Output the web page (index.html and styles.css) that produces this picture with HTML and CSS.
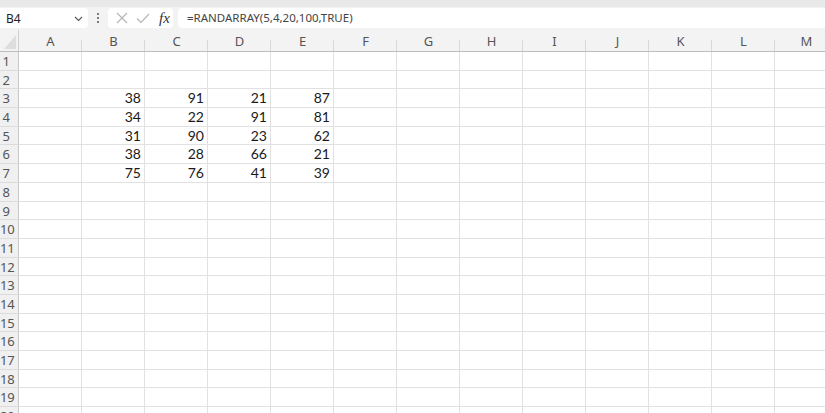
FILE: index.html
```html
<!DOCTYPE html>
<html lang="en">
<head>
  <meta charset="UTF-8">
  <title>Book1 - Excel</title>
  <link rel="stylesheet" href="styles.css">
</head>
<body>
  <div class="top-strip"></div>

  <!-- Name box + formula bar -->
  <div class="formula-bar">
    <div class="name-box">
      <span>B4</span>
      <svg class="chevron" width="9" height="6" viewBox="0 0 9 6"><path d="M1 1 L4.5 4.5 L8 1" fill="none" stroke="#555" stroke-width="1.1"/></svg>
    </div>
    <div class="dots"><i></i><i></i><i></i></div>
    <div class="fx-box">
      <svg width="12" height="12" viewBox="0 0 12 12"><path d="M1 1 L11 11 M11 1 L1 11" stroke="#b4b4b4" stroke-width="1.1" fill="none"/></svg>
      <svg width="14" height="11" viewBox="0 0 14 11"><path d="M1 5.5 L5 9.5 L13 1" stroke="#b4b4b4" stroke-width="1.1" fill="none"/></svg>
      <span class="fx">fx</span>
    </div>
    <div class="formula">=RANDARRAY(5,4,20,100,TRUE)</div>
  </div>

  <!-- Worksheet grid -->
  <div class="sheet" id="sheet"></div>

  <script>
    const cols = ['A','B','C','D','E','F','G','H','I','J','K','L','M'];
    const data = {
      3: [38, 91, 21, 87],
      4: [34, 22, 91, 81],
      5: [31, 90, 23, 62],
      6: [38, 28, 66, 21],
      7: [75, 76, 41, 39]
    };
    const sheet = document.getElementById('sheet');
    let html = '<div class="corner"><span class="tri"></span></div>';
    cols.forEach(c => { html += `<div class="col-head">${c}</div>`; });
    for (let r = 1; r <= 20; r++) {
      html += `<div class="row-head"><span>${r}</span></div>`;
      cols.forEach((c, i) => {
        const v = data[r] && i >= 1 && i <= 4 ? data[r][i - 1] : '';
        html += `<div class="cell">${v}</div>`;
      });
    }
    sheet.innerHTML = html;
  </script>
</body>
</html>
```

FILE: styles.css
```css
body {
  margin: 0;
  width: 825px;
  height: 413px;
  overflow: hidden;
  background-color: #fff;
  font-family: "Noto Sans", "Open Sans", sans-serif;
}

.top-strip {
  height: 7px;
  background-color: #e9e9e9;
}

.formula-bar {
  height: 23px;
  background-color: #f3f3f3;
  display: flex;
  align-items: flex-start;
  padding-top: 1px;
  box-sizing: border-box;
}

.name-box {
  width: 88px;
  height: 20px;
  background-color: #fff;
  border-radius: 0 4px 4px 0;
  display: flex;
  align-items: center;
  justify-content: space-between;
  padding: 0 5px 0 6px;
  box-sizing: border-box;
  font-size: 12px;
  color: #222;
}

.chevron {
  margin-top: 1px;
}

.dots {
  width: 20px;
  height: 20px;
  display: flex;
  flex-direction: column;
  align-items: center;
  justify-content: center;
  gap: 2px;
}

.dots i {
  width: 2px;
  height: 2px;
  background-color: #555;
  border-radius: 1px;
}

.fx-box {
  width: 65px;
  height: 20px;
  background-color: #fff;
  border-radius: 4px;
  display: flex;
  align-items: center;
  gap: 8px;
  padding-left: 8px;
  box-sizing: border-box;
}

.fx {
  font-family: "Liberation Serif", "DejaVu Serif", serif;
  font-style: italic;
  font-size: 15px;
  color: #333;
  margin-left: 1px;
}

.formula {
  flex: 1;
  height: 20px;
  margin-left: 5px;
  background-color: #fff;
  border-radius: 4px 0 0 4px;
  padding-left: 9px;
  font-size: 11.5px;
  line-height: 20px;
  color: #444;
}

.sheet {
  display: grid;
  grid-template-columns: 19px repeat(13, 63px);
  grid-template-rows: 22px repeat(20, 18.7px);
}

.corner {
  background-color: #f3f3f3;
  border-bottom: 1px solid #bdbdbd;
  border-right: 1px solid #cfcfcf;
  position: relative;
  box-sizing: border-box;
}

.corner .tri {
  position: absolute;
  right: 2px;
  bottom: 2px;
  width: 0;
  height: 0;
  border-left: 12px solid transparent;
  border-bottom: 14px solid #dedede;
}

.col-head {
  background-color: #f3f3f3;
  border-bottom: 1px solid #bdbdbd;
  position: relative;
  box-sizing: border-box;
  text-align: center;
  font-size: 13px;
  line-height: 23px;
  color: #555;
}

.col-head::after {
  content: "";
  position: absolute;
  right: 0;
  top: 10px;
  bottom: 0;
  width: 1px;
  background-color: #d8d8d8;
}

.row-head {
  background-color: #f0f0f0;
  border-right: 1px solid #c8c8c8;
  border-bottom: 1px solid #dcdcdc;
  box-sizing: border-box;
  font-size: 13px;
  color: #555;
  overflow: visible;
}

.row-head span {
  display: block;
  width: 12px;
  text-align: center;
  line-height: 18px;
  white-space: nowrap;
  letter-spacing: -0.3px;
}

.cell {
  border-right: 1px solid #e1e1e1;
  border-bottom: 1px solid #e1e1e1;
  box-sizing: border-box;
  text-align: right;
  padding-right: 3px;
  font-family: Lato, "Open Sans", sans-serif;
  font-size: 14px;
  line-height: 18px;
  color: #1a1a1a;
}
```
